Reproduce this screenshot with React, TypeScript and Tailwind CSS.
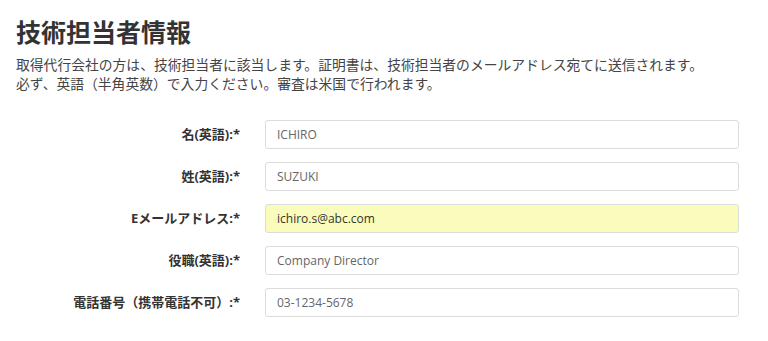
import React from 'react';

const fields = [
  { label: '名(英語):*', value: 'ICHIRO' },
  { label: '姓(英語):*', value: 'SUZUKI' },
  { label: 'Eメールアドレス:*', value: 'ichiro.s@abc.com', autofill: true },
  { label: '役職(英語):*', value: 'Company Director' },
  { label: '電話番号（携帯電話不可）:*', value: '03-1234-5678' },
];

const App = () => {
  return (
    <div className="min-h-[341px] w-[768px] bg-white px-4 pt-[16px] font-['Open_Sans','Noto_Sans_CJK_JP',sans-serif] text-[#333]">
      <h1 className="text-[25px] leading-[32px] font-bold text-[#333]">技術担当者情報</h1>
      <p className="mt-[7px] text-[13.8px] leading-[19px] text-[#444]">
        取得代行会社の方は、技術担当者に該当します。証明書は、技術担当者のメールアドレス宛てに送信されます。
        <br />
        必ず、英語（半角英数）で入力ください。審査は米国で行われます。
      </p>

      <form className="mt-[27px] flex flex-col gap-[13px]">
        {fields.map((f) => (
          <div key={f.label} className="flex items-center">
            <label className="w-[224px] text-right text-[13px] font-bold text-[#333]">{f.label}</label>
            <input
              readOnly
              value={f.value}
              className={
                f.autofill
                  ? 'ml-[25px] h-[29px] w-[474px] rounded-[3px] border border-[#dcdcdc] bg-[#fafcbc] px-[11px] text-[12px] text-[#333] outline-none'
                  : 'ml-[25px] h-[29px] w-[474px] rounded-[3px] border border-[#dcdcdc] bg-white px-[11px] text-[12px] text-[#666] outline-none'
              }
            />
          </div>
        ))}
      </form>
    </div>
  );
};

export default App;
